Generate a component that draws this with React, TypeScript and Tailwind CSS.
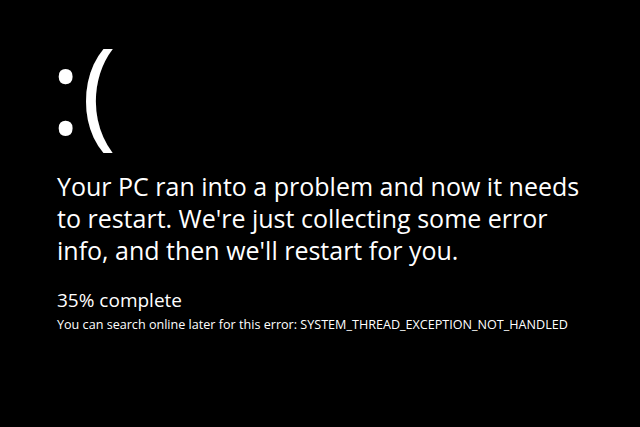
export default function App() {
  return (
    <div className="w-[640px] h-[427px] bg-black text-white overflow-hidden font-['Open_Sans',sans-serif]">
      <div className="flex flex-col pl-[57px] pt-[8px]">
        {/* Sad face */}
        <div className="-ml-[7px] h-[160px] text-[119px] leading-[160px] font-normal">:(</div>

        {/* Message */}
        <p className="mt-[2px] text-[25px] leading-[32px]">
          Your PC ran into a problem and now it needs
          <br />
          to restart. We're just collecting some error
          <br />
          info, and then we'll restart for you.
        </p>

        <p className="mt-[22px] text-[19px] leading-[24px]">35% complete</p>

        <p className="mt-[5px] text-[12.6px] leading-[16px]">
          You can search online later for this error: SYSTEM_THREAD_EXCEPTION_NOT_HANDLED
        </p>
      </div>
    </div>
  );
}
